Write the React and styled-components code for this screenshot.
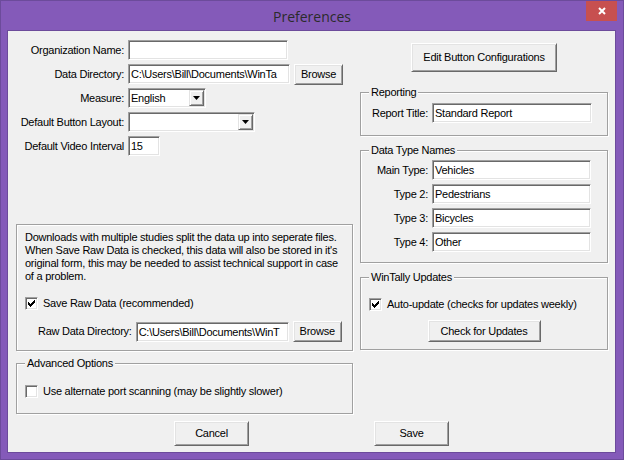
import React from 'react'
import styled, { createGlobalStyle } from 'styled-components'

const GlobalStyle = createGlobalStyle`
  html, body {
    margin: 0;
    padding: 0;
    background: #ffffff;
  }
`

const Window = styled.div`
  width: 624px;
  height: 460px;
  box-sizing: border-box;
  background: #845ab9;
  border: 1px solid #6c4b9b;
  display: flex;
  flex-direction: column;
`

const TitleBar = styled.div`
  height: 29px;
  display: grid;
  grid-template-columns: 1fr auto 1fr;
`

const Title = styled.div`
  grid-column: 2;
  align-self: center;
  font-family: "Open Sans", "Noto Sans", sans-serif;
  font-size: 14px;
  color: #2b2b2b;
  padding-top: 1px;
`

const CloseButton = styled.div`
  grid-column: 3;
  justify-self: end;
  margin-right: 6px;
  width: 31px;
  height: 20px;
  background: #c75050;
  display: flex;
  align-items: center;
  justify-content: center;
`

const Client = styled.div`
  flex: 1;
  margin: 0 7px 6px 6px;
  border: 1px solid #6c4b9b;
  background: #f0f0f0;
  display: flex;
  flex-direction: column;
  font-family: "Liberation Sans", Arial, sans-serif;
  font-size: 11px;
  line-height: 13px;
  letter-spacing: -0.25px;
  color: #000;
  white-space: nowrap;
`

const Main = styled.div`
  display: grid;
  grid-template-columns: 337px 248px;
  column-gap: 7px;
  padding: 9px 7px 0 8px;
  align-items: start;
`

const Column = styled.div`
  display: flex;
  flex-direction: column;
  align-items: ${p => p.$align || 'stretch'};
`

const FormGrid = styled.div`
  display: grid;
  grid-template-columns: ${p => p.$label}px auto;
  grid-auto-rows: 20px;
  column-gap: 4px;
  row-gap: 4px;
  align-items: center;
  justify-items: start;
  margin-top: ${p => p.$mt || 0}px;
`

const Label = styled.span`
  justify-self: end;
`

const Field = styled.div`
  width: ${p => p.$w}px;
  height: 20px;
  box-sizing: border-box;
  border: 1px solid;
  border-color: #a0a0a0 #ffffff #ffffff #a0a0a0;
  box-shadow: inset 1px 1px 0 #696969, inset -1px -1px 0 #e3e3e3;
  background: #fff;
  padding: 0 2px 0 2px;
  line-height: 18px;
  overflow: hidden;
`

const Combo = styled.div`
  width: ${p => p.$w}px;
  height: 20px;
  box-sizing: border-box;
  border: 1px solid;
  border-color: #a0a0a0 #ffffff #ffffff #a0a0a0;
  box-shadow: inset 1px 1px 0 #696969, inset -1px -1px 0 #e3e3e3;
  background: #fff;
  padding: 1px;
  display: flex;
`

const ComboValue = styled.div`
  flex: 1;
  padding-left: 1px;
  line-height: 16px;
  overflow: hidden;
`

const ComboArrow = styled.div`
  width: 15px;
  box-sizing: border-box;
  background: #f0f0f0;
  border: 1px solid;
  border-color: #e3e3e3 #696969 #696969 #e3e3e3;
  box-shadow: inset 1px 1px 0 #ffffff, inset -1px -1px 0 #a0a0a0;
  display: flex;
  align-items: center;
  justify-content: center;
`

const Button = styled.div`
  width: ${p => p.$w}px;
  height: ${p => p.$h}px;
  box-sizing: border-box;
  background: #f0f0f0;
  border: 1px solid;
  border-color: #ffffff #696969 #696969 #ffffff;
  box-shadow: inset 1px 1px 0 #e3e3e3, inset -1px -1px 0 #a0a0a0;
  display: flex;
  align-items: center;
  justify-content: center;
  margin-top: ${p => p.$mt || 0}px;
`

const InlineRow = styled.div`
  display: flex;
  align-items: center;
  gap: 4px;
  margin-top: ${p => p.$mt || 0}px;
  padding-left: ${p => p.$pl || 0}px;
`

const GroupBox = styled.div`
  border: 1px solid #a0a0a0;
  box-shadow: inset 1px 1px 0 #ffffff, 1px 1px 0 #ffffff;
  padding: ${p => p.$pt || 0}px 8px ${p => p.$pb || 0}px 8px;
  margin-top: ${p => p.$mt || 0}px;
  display: flex;
  flex-direction: column;
  align-items: ${p => p.$align || 'stretch'};
`

const Legend = styled.div`
  align-self: flex-start;
  margin-top: -7px;
  padding: 0 2px;
  background: #f0f0f0;
  line-height: 13px;
`

const Paragraph = styled.div`
  white-space: pre;
  line-height: 13px;
`

const CheckRow = styled.div`
  display: flex;
  align-items: center;
  gap: 5px;
  height: 13px;
  margin-top: ${p => p.$mt || 0}px;
  align-self: flex-start;
`

const CheckBox = styled.span`
  width: 13px;
  height: 13px;
  box-sizing: border-box;
  border: 1px solid;
  border-color: #a0a0a0 #ffffff #ffffff #a0a0a0;
  box-shadow: inset 1px 1px 0 #696969, inset -1px -1px 0 #e3e3e3;
  background: #fff;
  display: flex;
  align-items: center;
  justify-content: center;
`

const ButtonRow = styled.div`
  display: flex;
  justify-content: center;
  gap: 125px;
  margin-top: 7px;
`

const Check = ({ checked }) => (
  <CheckBox>
    {checked && (
      <svg width="7" height="7" viewBox="0 0 7 7">
        <path
          d="M0 2H1V3H2V4H3V3H4V2H5V1H6V0H7V3H6V4H5V5H4V6H3V7H2V6H1V5H0Z"
          fill="#000"
        />
      </svg>
    )}
  </CheckBox>
)

const Select = ({ w, value }) => (
  <Combo $w={w}>
    <ComboValue>{value}</ComboValue>
    <ComboArrow>
      <svg width="7" height="4" viewBox="0 0 7 4">
        <path d="M0 0H7L3.5 4Z" fill="#000" />
      </svg>
    </ComboArrow>
  </Combo>
)

const dataTypes = [
  ['Main Type:', 'Vehicles'],
  ['Type 2:', 'Pedestrians'],
  ['Type 3:', 'Bicycles'],
  ['Type 4:', 'Other'],
]

const rawText = `Downloads with multiple studies split the data up into seperate files.
When Save Raw Data is checked, this data will also be stored in it's
original form, this may be needed to assist technical support in case
of a problem.`

export default function App() {
  return (
    <Window>
      <GlobalStyle />
      <TitleBar>
        <Title>Preferences</Title>
        <CloseButton>
          <svg width="8" height="8" viewBox="0 0 8 8">
            <path d="M1 1L7 7M7 1L1 7" stroke="#fff" strokeWidth="2" />
          </svg>
        </CloseButton>
      </TitleBar>
      <Client>
        <Main>
          <Column>
            <FormGrid $label={108}>
              <Label>Organization Name:</Label>
              <Field $w={160} />
              <Label>Data Directory:</Label>
              <InlineRow>
                <Field $w={162}>C:\Users\Bill\Documents\WinTa</Field>
                <Button $w={49} $h={21}>Browse</Button>
              </InlineRow>
              <Label>Measure:</Label>
              <Select w={78} value="English" />
              <Label>Default Button Layout:</Label>
              <Select w={127} value="" />
              <Label>Default Video Interval</Label>
              <Field $w={32}>15</Field>
            </FormGrid>

            <GroupBox $mt={68} $pt={6} $pb={8}>
              <Paragraph>{rawText}</Paragraph>
              <CheckRow $mt={14}>
                <Check checked />
                <span>Save Raw Data (recommended)</span>
              </CheckRow>
              <InlineRow $mt={11} $pl={13}>
                <span>Raw Data Directory:</span>
                <Field $w={153}>C:\Users\Bill\Documents\WinT</Field>
                <Button $w={49} $h={21}>Browse</Button>
              </InlineRow>
            </GroupBox>

            <GroupBox $mt={12} $pb={15}>
              <Legend>Advanced Options</Legend>
              <CheckRow $mt={15}>
                <Check />
                <span>Use alternate port scanning (may be slightly slower)</span>
              </CheckRow>
            </GroupBox>
          </Column>

          <Column>
            <Column $align="center">
              <Button $w={146} $h={29} $mt={3}>Edit Button Configurations</Button>
            </Column>

            <GroupBox $mt={20} $pb={12}>
              <Legend>Reporting</Legend>
              <FormGrid $label={59} $mt={4}>
                <Label>Report Title:</Label>
                <Field $w={160}>Standard Report</Field>
              </FormGrid>
            </GroupBox>

            <GroupBox $mt={14} $pb={10}>
              <Legend>Data Type Names</Legend>
              <FormGrid $label={59} $mt={3}>
                {dataTypes.map(([label, value]) => (
                  <React.Fragment key={label}>
                    <Label>{label}</Label>
                    <Field $w={159}>{value}</Field>
                  </React.Fragment>
                ))}
              </FormGrid>
            </GroupBox>

            <GroupBox $mt={14} $pb={7} $align="center">
              <Legend>WinTally Updates</Legend>
              <CheckRow $mt={14}>
                <Check checked />
                <span>Auto-update (checks for updates weekly)</span>
              </CheckRow>
              <Button $w={113} $h={22} $mt={9}>Check for Updates</Button>
            </GroupBox>
          </Column>
        </Main>

        <ButtonRow>
          <Button $w={75} $h={25}>Cancel</Button>
          <Button $w={75} $h={25}>Save</Button>
        </ButtonRow>
      </Client>
    </Window>
  )
}
